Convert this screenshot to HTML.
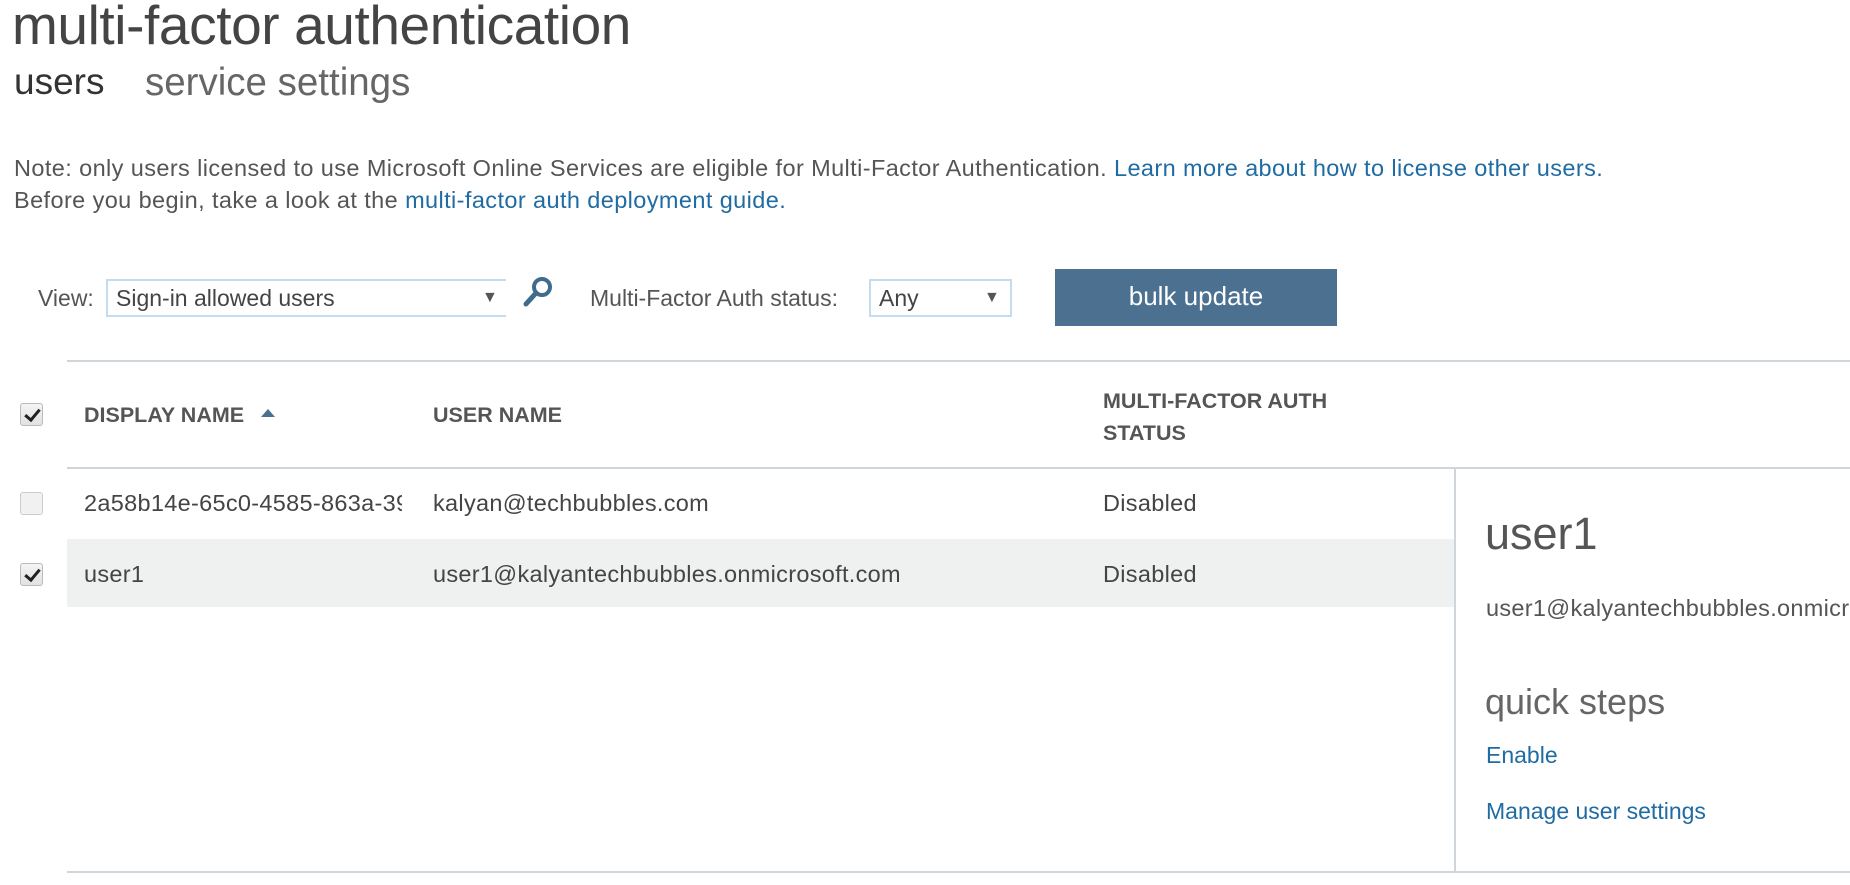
<!DOCTYPE html>
<html><head><meta charset="utf-8"><style>
*{margin:0;padding:0;box-sizing:border-box}
body{width:1850px;height:885px;background:#fff;font-family:"Liberation Sans",sans-serif;color:#444;position:relative;overflow:hidden}
.a{position:absolute;white-space:nowrap}
a,.lk{color:#1f6ba3;text-decoration:none}
.cb{position:absolute;width:23px;height:23px;border:1px solid #bbb;border-radius:3px;background:linear-gradient(#f4f4f4,#e2e2e2)}
.cb.on::after{content:"";position:absolute;left:7px;top:2px;width:6px;height:12px;border:solid #222;border-width:0 3px 3px 0;transform:rotate(40deg)}
.hd{font-weight:bold;font-size:21.5px;color:#555}
.tx{font-size:23.5px;color:#444;letter-spacing:0.3px}
</style></head><body>
<div class="a" style="left:12px;top:-7px;font-size:55px;color:#444;letter-spacing:-0.4px">multi-factor authentication</div>
<div class="a" style="left:14px;top:61px;font-size:37px;color:#333">users</div>
<div class="a" style="left:145px;top:61px;font-size:38.5px;color:#666">service settings</div>
<div class="a" style="left:14px;top:155px;font-size:23.5px;color:#555;letter-spacing:0.4px">Note: only users licensed to use Microsoft Online Services are eligible for Multi-Factor Authentication. <span class="lk">Learn more about how to license other users.</span></div>
<div class="a" style="left:14px;top:187px;font-size:23.5px;color:#555;letter-spacing:0.4px">Before you begin, take a look at the <span class="lk">multi-factor auth deployment guide.</span></div>

<div class="a" style="left:38px;top:285px;font-size:23px;color:#555">View:</div>
<div class="a" style="left:106px;top:279px;width:400px;height:38px;border:2px solid #c5dcef;border-right:none"></div>
<div class="a" style="left:116px;top:285px;font-size:23px;color:#444">Sign-in allowed users</div>
<div class="a" style="left:482px;top:289px;font-size:16px;color:#555">▼</div>
<svg class="a" style="left:520px;top:274px" width="36" height="36" viewBox="0 0 36 36"><circle cx="22" cy="13" r="8" fill="none" stroke="#3f6c8c" stroke-width="4"/><line x1="16" y1="19" x2="6" y2="30" stroke="#3f6c8c" stroke-width="5" stroke-linecap="round"/></svg>
<div class="a" style="left:590px;top:285px;font-size:23px;color:#555">Multi-Factor Auth status:</div>
<div class="a" style="left:869px;top:279px;width:143px;height:38px;border:2px solid #c5dcef"></div>
<div class="a" style="left:879px;top:285px;font-size:23px;color:#444">Any</div>
<div class="a" style="left:984px;top:289px;font-size:16px;color:#555">▼</div>
<div class="a" style="left:1055px;top:269px;width:282px;height:57px;background:#4b7090;color:#fff;font-size:26px;text-align:center;line-height:55px">bulk update</div>

<div class="a" style="left:67px;top:360px;width:1783px;height:2px;background:#cfd6db"></div>
<div class="cb on" style="left:20px;top:403px"></div>
<div class="a hd" style="left:84px;top:403px">DISPLAY NAME</div>
<div class="a" style="left:261px;top:409px;width:0;height:0;border:7px solid transparent;border-bottom:8px solid #4b7090;border-top:none"></div>
<div class="a hd" style="left:433px;top:403px">USER NAME</div>
<div class="a hd" style="left:1103px;top:385px;line-height:32px">MULTI-FACTOR AUTH<br>STATUS</div>
<div class="a" style="left:67px;top:467px;width:1783px;height:2px;background:#cfd6db"></div>

<div class="cb" style="left:20px;top:492px;border-color:#ccc;background:#f1f1f1"></div>
<div class="a tx" style="left:84px;top:490px;width:318px;overflow:hidden">2a58b14e-65c0-4585-863a-39</div>
<div class="a tx" style="left:433px;top:490px">kalyan@techbubbles.com</div>
<div class="a tx" style="left:1103px;top:490px">Disabled</div>

<div class="a" style="left:67px;top:539px;width:1388px;height:68px;background:#eef1f0"></div>
<div class="cb on" style="left:20px;top:563px"></div>
<div class="a tx" style="left:84px;top:561px">user1</div>
<div class="a tx" style="left:433px;top:561px">user1@kalyantechbubbles.onmicrosoft.com</div>
<div class="a tx" style="left:1103px;top:561px">Disabled</div>

<div class="a" style="left:1454px;top:468px;width:2px;height:404px;background:#cfd6db"></div>
<div class="a" style="left:67px;top:871px;width:1783px;height:2px;background:#cfd6db"></div>

<div class="a" style="left:1485px;top:508px;font-size:45px;color:#555">user1</div>
<div class="a" style="left:1486px;top:595px;font-size:23.5px;color:#555;letter-spacing:0.3px">user1@kalyantechbubbles.onmicr</div>
<div class="a" style="left:1485px;top:681px;font-size:36px;color:#666">quick steps</div>
<div class="a lk" style="left:1486px;top:742px;font-size:23px">Enable</div>
<div class="a lk" style="left:1486px;top:798px;font-size:23px">Manage user settings</div>
</body></html>
